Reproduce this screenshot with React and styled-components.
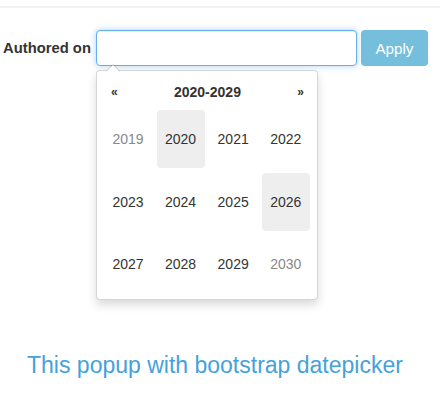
import React from 'react';
import styled, { createGlobalStyle } from 'styled-components';

const GlobalStyle = createGlobalStyle`
  body {
    margin: 0;
    background: #fff;
    font-family: "Liberation Sans", Arial, sans-serif;
    color: #333;
  }
`;

const Page = styled.div`
  width: 440px;
  height: 413px;
  overflow: hidden;
`;

const TopRule = styled.div`
  height: 6px;
  border-bottom: 2px solid #f3f3f3;
`;

const FilterRow = styled.div`
  display: flex;
  align-items: center;
  margin-top: 22px;
  padding-left: 3px;
`;

const Label = styled.label`
  font-size: 14.8px;
  font-weight: 700;
  color: #333;
  margin-right: 5px;
`;

const InputWrap = styled.div`
  position: relative;
`;

const DateInput = styled.input`
  box-sizing: border-box;
  width: 261px;
  height: 36px;
  padding: 6px 12px;
  font-size: 14px;
  font-family: inherit;
  border: 1px solid #66afe9;
  border-radius: 4px;
  outline: none;
  box-shadow: inset 0 1px 1px rgba(0, 0, 0, 0.075), 0 0 6px rgba(102, 175, 233, 0.55);
`;

const ApplyButton = styled.button`
  box-sizing: border-box;
  width: 67px;
  height: 36px;
  margin-left: 4px;
  border: none;
  border-radius: 4px;
  background: #75bedc;
  color: #fff;
  font-family: inherit;
  font-size: 15.2px;
`;

const Popup = styled.div`
  position: absolute;
  top: 40px;
  left: 0;
  box-sizing: border-box;
  width: 222px;
  padding: 5px 7px 6px 7px;
  background: #fff;
  border: 1px solid rgba(0, 0, 0, 0.16);
  border-radius: 4px;
  box-shadow: 0 5px 10px rgba(0, 0, 0, 0.15);
  z-index: 10;

  &::before {
    content: '';
    position: absolute;
    top: -7px;
    left: 9px;
    border-left: 7px solid transparent;
    border-right: 7px solid transparent;
    border-bottom: 7px solid rgba(0, 0, 0, 0.18);
  }

  &::after {
    content: '';
    position: absolute;
    top: -6px;
    left: 10px;
    border-left: 6px solid transparent;
    border-right: 6px solid transparent;
    border-bottom: 6px solid #fff;
  }
`;

const Header = styled.div`
  display: flex;
  align-items: center;
  justify-content: space-between;
  height: 32px;
  margin-bottom: 2px;
  padding: 0 6px 0 7px;
  font-size: 14px;
  font-weight: 700;
  color: #333;
`;

const Arrow = styled.span`
  font-size: 12px;
  cursor: pointer;
`;

const YearGrid = styled.div`
  display: grid;
  grid-template-columns: repeat(4, 48px);
  grid-auto-rows: 58px;
  gap: 4.6px;
`;

const Year = styled.span`
  display: flex;
  align-items: center;
  justify-content: center;
  border-radius: 4px;
  font-size: 14px;
  color: ${p => (p.$muted ? '#888' : '#333')};
  background: ${p => (p.$active ? '#eeeeee' : 'transparent')};
`;

const Caption = styled.h2`
  margin: 286px 0 0 0;
  padding-left: 27px;
  font-size: 23px;
  line-height: 26px;
  font-weight: 400;
  color: #45a2d9;
`;

const years = [
  2019, 2020, 2021, 2022, 2023, 2024, 2025, 2026, 2027, 2028, 2029, 2030,
];

export default function App() {
  return (
    <Page>
      <GlobalStyle />
      <TopRule />
      <FilterRow>
        <Label>Authored on</Label>
        <InputWrap>
          <DateInput type="text" />
          <Popup>
            <Header>
              <Arrow>«</Arrow>
              <span>2020-2029</span>
              <Arrow>»</Arrow>
            </Header>
            <YearGrid>
              {years.map(y => (
                <Year
                  key={y}
                  $muted={y === 2019 || y === 2030}
                  $active={y === 2020 || y === 2026}
                >
                  {y}
                </Year>
              ))}
            </YearGrid>
          </Popup>
        </InputWrap>
        <ApplyButton>Apply</ApplyButton>
      </FilterRow>
      <Caption>This popup with bootstrap datepicker</Caption>
    </Page>
  );
}
